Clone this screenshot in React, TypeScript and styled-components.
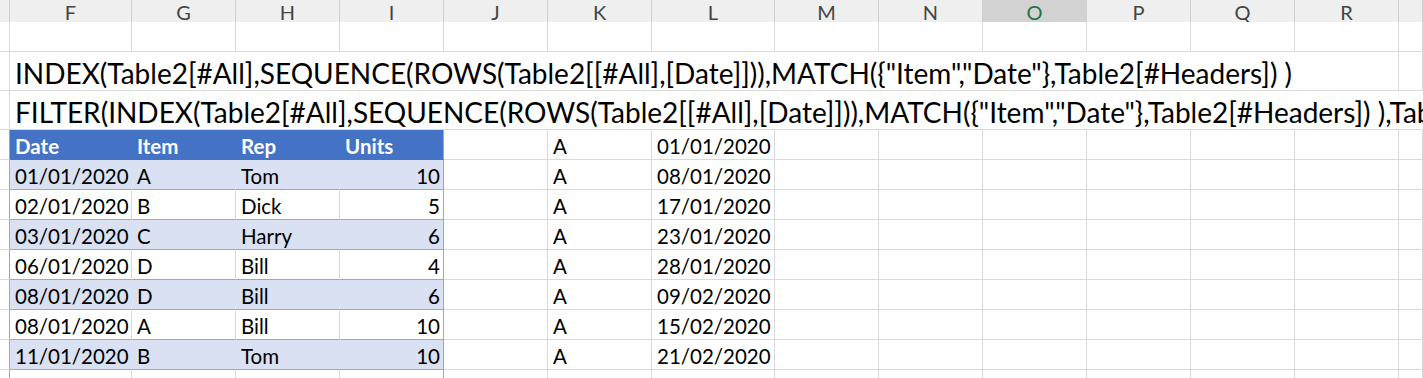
import React, { FC } from 'react';
import styled, { createGlobalStyle } from 'styled-components';

const COLS = '10px 122px 104px 104px 104px 104px 104px 123px 104px 104px 104px 104px 104px 104px 1fr';
const LETTERS = ['', 'F', 'G', 'H', 'I', 'J', 'K', 'L', 'M', 'N', 'O', 'P', 'Q', 'R', ''];
const GRID = '#dadada';
const TABLE_LINE = '#8ea9db';
const BAND = '#d9e1f2';
const HEAD = '#4472c4';

const GlobalStyle = createGlobalStyle`
	html, body {
		margin: 0;
		padding: 0;
		background: #ffffff;
		overflow: hidden;
	}
	body {
		font-family: Lato, 'Liberation Sans', sans-serif;
	}
`;

const Sheet = styled.div`
	width: 1423px;
	height: 378px;
	overflow: hidden;
	background: #ffffff;
`;

const Row = styled.div<{ $h: number }>`
	display: grid;
	grid-template-columns: ${COLS};
	height: ${({ $h }) => $h}px;
`;

const ColHead = styled.div<{ $active?: boolean }>`
	box-sizing: border-box;
	display: flex;
	align-items: center;
	justify-content: center;
	background: ${({ $active }) => ($active ? '#d2d2d2' : '#efefef')};
	color: ${({ $active }) => ($active ? '#217346' : '#444444')};
	border-right: 1px solid #d0d0d0;
	border-bottom: ${({ $active }) => ($active ? '2px solid #217346' : '1px solid #ababab')};
	font-size: 20px;
	padding-bottom: ${({ $active }) => ($active ? 0 : 1)}px;
`;

type CellProps = {
	$span?: number;
	$fill?: string;
	$right?: string;
	$bottom?: string;
	$align?: 'left' | 'right';
	$bold?: boolean;
	$color?: string;
	$size?: number;
};

const Cell = styled.div<CellProps>`
	box-sizing: border-box;
	grid-column: span ${({ $span }) => $span ?? 1};
	display: flex;
	align-items: flex-end;
	justify-content: ${({ $align }) => ($align === 'right' ? 'flex-end' : 'flex-start')};
	padding: 0 3px 0 5px;
	background: ${({ $fill }) => $fill ?? '#ffffff'};
	border-right: 1px solid ${({ $right }) => $right ?? GRID};
	border-bottom: 1px solid ${({ $bottom }) => $bottom ?? GRID};
	color: ${({ $color }) => $color ?? '#000000'};
	font-size: ${({ $size }) => $size ?? 20.5}px;
	font-weight: ${({ $bold }) => ($bold ? 700 : 400)};
	white-space: nowrap;
	overflow: visible;
	line-height: 1.15;
`;

const Formula = styled(Cell)`
	padding-bottom: 1px;
`;

const EmptyCells: FC<{ from: number; to: number }> = ({ from, to }) => (
	<>
		{Array.from({ length: to - from }, (_, i) => (
			<Cell key={from + i} />
		))}
	</>
);

const tableRows = [
	['01/01/2020', 'A', 'Tom', '10'],
	['02/01/2020', 'B', 'Dick', '5'],
	['03/01/2020', 'C', 'Harry', '6'],
	['06/01/2020', 'D', 'Bill', '4'],
	['08/01/2020', 'D', 'Bill', '6'],
	['08/01/2020', 'A', 'Bill', '10'],
	['11/01/2020', 'B', 'Tom', '10'],
	['14/01/2020', 'C', 'Harry', '6']
];

const itemDates = [
	'01/01/2020',
	'08/01/2020',
	'17/01/2020',
	'23/01/2020',
	'28/01/2020',
	'09/02/2020',
	'15/02/2020',
	'21/02/2020',
	'27/02/2020'
];

const App: FC = () => (
	<Sheet>
		<GlobalStyle />
		<Row $h={22}>
			{LETTERS.map((l, i) => (
				<ColHead key={i} $active={l === 'O'}>
					{l}
				</ColHead>
			))}
		</Row>
		<Row $h={30}>
			<EmptyCells from={0} to={15} />
		</Row>
		<Row $h={39}>
			<Cell />
			<Formula $span={12} $right="#ffffff" $size={28}>
				{'INDEX(Table2[#All],SEQUENCE(ROWS(Table2[[#All],[Date]])),MATCH({"Item","Date"},Table2[#Headers]) )'}
			</Formula>
			<EmptyCells from={13} to={15} />
		</Row>
		<Row $h={39}>
			<Cell />
			<Formula $span={14} $right="#ffffff" $size={28}>
				{'FILTER(INDEX(Table2[#All],SEQUENCE(ROWS(Table2[[#All],[Date]])),MATCH({"Item","Date"},Table2[#Headers]) ),Table2[Item]="A")'}
			</Formula>
		</Row>
		<Row $h={30}>
			<Cell $right={TABLE_LINE} $bottom={GRID} />
			{['Date', 'Item', 'Rep', 'Units'].map((h, i) => (
				<Cell key={h} $fill={HEAD} $right={i === 3 ? TABLE_LINE : HEAD} $bottom={HEAD} $bold $color="#ffffff">
					{h}
				</Cell>
			))}
			<Cell />
			<Cell>A</Cell>
			<Cell>{itemDates[0]}</Cell>
			<EmptyCells from={8} to={15} />
		</Row>
		{tableRows.map((r, idx) => {
			const band = idx % 2 === 0;
			const fill = band ? BAND : '#ffffff';
			return (
				<Row $h={30} key={idx}>
					<Cell $right={TABLE_LINE} />
					{r.map((v, i) => (
						<Cell
							key={i}
							$fill={fill}
							$right={i === 3 ? TABLE_LINE : band ? BAND : GRID}
							$bottom={TABLE_LINE}
							$align={i === 3 ? 'right' : 'left'}
						>
							{v}
						</Cell>
					))}
					<Cell />
					<Cell>A</Cell>
					<Cell>{itemDates[idx + 1]}</Cell>
					<EmptyCells from={8} to={15} />
				</Row>
			);
		})}
	</Sheet>
);

export default App;
